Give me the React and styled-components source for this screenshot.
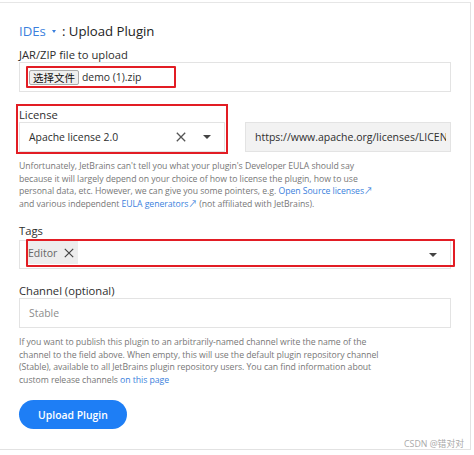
import React from "react";
import styled, { createGlobalStyle } from "styled-components";

const GlobalStyle = createGlobalStyle`
  html, body {
    margin: 0;
    padding: 0;
    background: #ffffff;
  }
  body {
    font-family: "Open Sans", "Noto Sans", "Noto Sans CJK SC", sans-serif;
    color: #2b2b2b;
  }
`;

const Page = styled.div`
  width: 474px;
  height: 455px;
  padding-top: 2px;
  box-sizing: border-box;
  overflow: hidden;
`;

const Panel = styled.div`
  width: 471px;
  height: 448px;
  box-sizing: border-box;
  border-top: 1px solid #e6e6e6;
  border-right: 1px solid #e2e2e2;
  border-bottom: 1px solid #e2e2e2;
  padding: 18px 19px 0 19px;
  display: flex;
  flex-direction: column;
  position: relative;
`;

const Title = styled.div`
  display: flex;
  align-items: center;
  height: 20px;
  font-size: 13.2px;
  color: #222;
`;

const Crumb = styled.span`
  color: #3b7fdd;
`;

const Caret = styled.span`
  display: inline-block;
  width: 0;
  height: 0;
  border-left: ${({ size }) => size || 2.5}px solid transparent;
  border-right: ${({ size }) => size || 2.5}px solid transparent;
  border-top: ${({ size }) => (size || 2.5) + 0.5}px solid ${({ color }) => color || "#3b7fdd"};
  margin: ${({ gap }) => gap || "0 6px 0 6px"};
`;

const Label = styled.div`
  font-size: 11.2px;
  line-height: 14px;
  color: #2e2e2e;
  margin: ${({ gap }) => gap || "0"};
`;

const Box = styled.div`
  height: ${({ h }) => h || 30}px;
  box-sizing: border-box;
  border: 1px solid #e3e3e3;
  background: ${({ muted }) => (muted ? "#f2f2f2" : "#fff")};
  display: flex;
  align-items: center;
  padding: 0 ${({ pad }) => pad ?? 9}px;
  font-size: ${({ fs }) => fs || 10.4}px;
  color: ${({ faint }) => (faint ? "#8c8c8c" : "#2e2e2e")};
  width: ${({ w }) => (w ? `${w}px` : "auto")};
  margin: ${({ gap }) => gap || "0"};
  white-space: nowrap;
  overflow: hidden;
  position: relative;
`;

const ClippedValue = styled.span`
  flex: 1;
  min-width: 0;
  overflow: hidden;
  margin-right: -5px;
`;

const Marked = styled.div`
  display: flex;
  align-items: center;
  gap: 3px;
  border: 2px solid #e21d24;
  border-radius: 1px;
  height: 22px;
  width: 150px;
  box-sizing: border-box;
  padding: 0 1px;
`;

const FileButton = styled.span`
  font-family: "Noto Sans CJK SC", sans-serif;
  font-size: 10.5px;
  line-height: 13px;
  background: #efefef;
  border: 1px solid #ababab;
  border-radius: 2px;
  padding: 0 3px;
  color: #111;
`;

const Row = styled.div`
  display: flex;
  align-items: flex-end;
  gap: 17px;
  margin-top: 12px;
`;

const LicenseGroup = styled.div`
  border: 2px solid #e21d24;
  width: 212px;
  box-sizing: border-box;
  margin-left: -3px;
  padding: 2px 1px 0 1px;
`;

const Icons = styled.div`
  margin-left: auto;
  display: flex;
  align-items: center;
  gap: ${({ gap }) => gap || 0}px;
`;

const Help = styled.p`
  font-size: 8.7px;
  line-height: 12.5px;
  letter-spacing: -0.05px;
  color: #777;
  white-space: nowrap;
  margin: ${({ gap }) => gap || "0"};
`;

const Link = styled.a`
  color: #3b7fdd;
  text-decoration: none;
`;

const Chip = styled.span`
  align-self: flex-start;
  display: inline-flex;
  align-items: center;
  gap: 7px;
  background: #ededed;
  color: #666;
  font-size: 10.5px;
  height: 23px;
  padding: 0 4px 0 1px;
`;

const Annotation = styled.div`
  position: absolute;
  left: 6px;
  right: -5px;
  top: -2px;
  bottom: 1px;
  border: 2px solid #e21d24;
  border-radius: 1px;
  pointer-events: none;
`;

const TagsBox = styled(Box)`
  padding: 0 13px 0 7px;
  overflow: visible;
`;

const UploadButton = styled.button`
  align-self: flex-start;
  margin-top: 14px;
  width: 108px;
  height: 29px;
  border: none;
  border-radius: 15px;
  background: #1e7ef5;
  color: #fff;
  font-family: inherit;
  font-size: 10.4px;
  font-weight: 600;
  padding: 0;
`;

const Watermark = styled.div`
  position: absolute;
  right: 6px;
  bottom: -1px;
  font-size: 8.8px;
  color: #a9a9a9;
  font-family: "Open Sans", "Noto Sans CJK SC", sans-serif;
`;

const Cross = ({ size = 10, color = "#555", width = 1.3 }) => (
  <svg width={size} height={size} viewBox="0 0 10 10">
    <path d="M0.8 0.8 L9.2 9.2 M9.2 0.8 L0.8 9.2" stroke={color} strokeWidth={width} fill="none" />
  </svg>
);

export default function App() {
  return (
    <Page>
      <GlobalStyle />
      <Panel>
        <Title>
          <Crumb>IDEs</Crumb>
          <Caret />
          <span>: Upload Plugin</span>
        </Title>

        <Label gap="7px 0 0 0">JAR/ZIP file to upload</Label>
        <Box pad={6}>
          <Marked>
            <FileButton>选择文件</FileButton>
            <span>demo (1).zip</span>
          </Marked>
        </Box>

        <Row>
          <LicenseGroup>
            <Label>License</Label>
            <Box>
              <span>Apache license 2.0</span>
              <Icons gap={17} style={{ marginRight: 4 }}>
                <Cross color="#555" />
                <Caret size={4} color="#444" gap="0" />
              </Icons>
            </Box>
          </LicenseGroup>
          <Box muted w={206} gap="0 0 2px 0" fs={10.5}>
            <ClippedValue>https://www.apache.org/licenses/LICENSE-2.0</ClippedValue>
          </Box>
        </Row>

        <Help gap="6px 0 0 0">
          Unfortunately, JetBrains can't tell you what your plugin's Developer EULA should say
          <br />
          because it will largely depend on your choice of how to license the plugin, how to use
          <br />
          personal data, etc. However, we can give you some pointers, e.g.{" "}
          <Link>Open Source licenses↗</Link>
          <br />
          and various independent <Link>EULA generators↗</Link> (not affiliated with JetBrains).
        </Help>

        <Label gap="14px 0 2px 0">Tags</Label>
        <TagsBox h={29}>
          <Chip>
            Editor
            <Cross size={10} color="#444" width={1.2} />
          </Chip>
          <Icons>
            <Caret size={4} color="#444" gap="0" />
          </Icons>
          <Annotation />
        </TagsBox>

        <Label gap="15px 0 0 0">Channel (optional)</Label>
        <Box faint>Stable</Box>

        <Help gap="8px 0 0 0">
          If you want to publish this plugin to an arbitrarily-named channel write the name of the
          <br />
          channel to the field above. When empty, this will use the default plugin repository channel
          <br />
          (Stable), available to all JetBrains plugin repository users. You can find information about
          <br />
          custom release channels <Link>on this page</Link>
        </Help>

        <UploadButton>Upload Plugin</UploadButton>

        <Watermark>CSDN @错对对</Watermark>
      </Panel>
    </Page>
  );
}
